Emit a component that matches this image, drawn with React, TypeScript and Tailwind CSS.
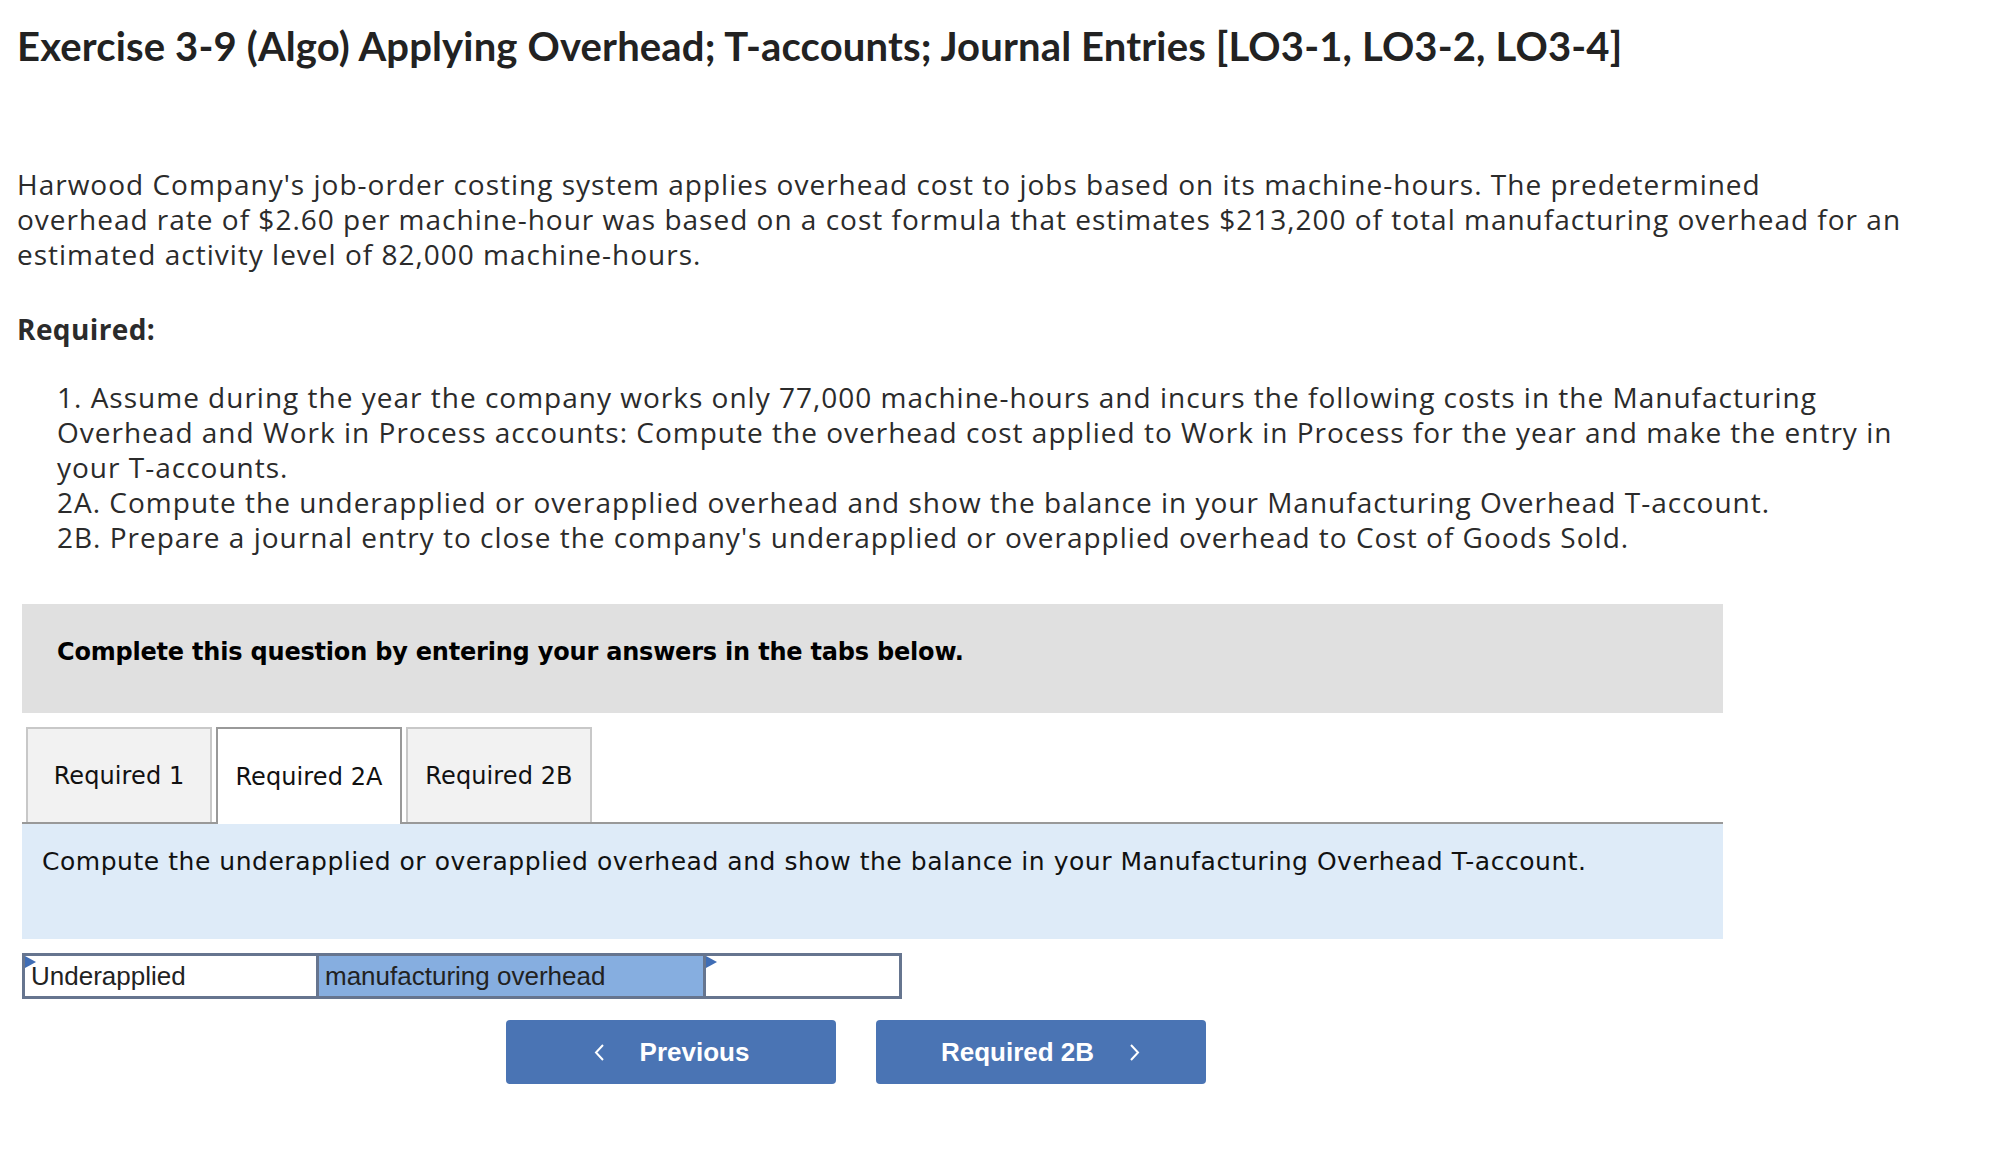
import React from "react";

const body = "font-['Open_Sans',sans-serif] text-[28px] leading-[35px] text-[#2b2b2b]";
const verdana = "font-['DejaVu_Sans',Verdana,sans-serif]";
const arial = "font-['Liberation_Sans',Arial,sans-serif]";

function Chevron({ dir }: { dir: "left" | "right" }) {
  return (
    <svg width="13" height="19" viewBox="0 0 13 19" className="shrink-0">
      <polyline
        points={dir === "left" ? "10,2 3,9.5 10,17" : "3,2 10,9.5 3,17"}
        fill="none"
        stroke="white"
        strokeWidth="2"
      />
    </svg>
  );
}

function Flag() {
  return (
    <svg width="11" height="13" viewBox="0 0 11 13" className="absolute left-0 top-0">
      <polygon points="0,0 11,6 0,12" fill="#3f6db5" />
    </svg>
  );
}

const TABS = ["Required 1", "Required 2A", "Required 2B"];

export default function App() {
  return (
    <div className="min-h-screen bg-white pb-10">
      <div className="pl-[17px] pt-[22px]">
        <h1 className="font-['Lato',sans-serif] text-[40px] font-bold leading-[48px] tracking-[0.15px] text-[#222]">
          Exercise 3-9 (Algo) Applying Overhead; T-accounts; Journal Entries [LO3-1, LO3-2, LO3-4]
        </h1>

        <p className={`${body} mt-[97px] whitespace-nowrap tracking-[1px]`}>
          Harwood Company's job-order costing system applies overhead cost to jobs based on its machine-hours. The predetermined
          <br />
          overhead rate of $2.60 per machine-hour was based on a cost formula that estimates $213,200 of total manufacturing overhead for an
          <br />
          estimated activity level of 82,000 machine-hours.
        </p>

        <p className={`${body} mt-[40px] font-bold tracking-[0.4px]`}>Required:</p>

        <p className={`${body} mt-[33px] whitespace-nowrap pl-[40px] tracking-[1px]`}>
          1. Assume during the year the company works only 77,000 machine-hours and incurs the following costs in the Manufacturing
          <br />
          Overhead and Work in Process accounts: Compute the overhead cost applied to Work in Process for the year and make the entry in
          <br />
          your T-accounts.
          <br />
          2A. Compute the underapplied or overapplied overhead and show the balance in your Manufacturing Overhead T-account.
          <br />
          2B. Prepare a journal entry to close the company's underapplied or overapplied overhead to Cost of Goods Sold.
        </p>
      </div>

      <div className="ml-[22px] mt-[49px] w-[1701px]">
        <div className="h-[109px] bg-[#e0e0e0] pl-[35px] pt-[30px]">
          <p className={`${verdana} text-[24px] font-bold tracking-[-0.2px] text-black`}>
            Complete this question by entering your answers in the tabs below.
          </p>
        </div>

        <div className="mt-[14px] flex items-end gap-[4px] border-b-2 border-[#999] pl-[4px]">
          {TABS.map((t) => {
            const active = t === "Required 2A";
            return (
              <div
                key={t}
                className={`${verdana} flex h-[95px] w-[186px] items-center justify-center border-2 border-b-0 text-[24px] tracking-[0.1px] text-[#111] ${
                  active ? "-mb-[2px] h-[97px] border-[#999] bg-white" : "border-[#c8c8c8] bg-[#f2f2f2]"
                }`}
              >
                {t}
              </div>
            );
          })}
        </div>

        <div className="h-[115px] bg-[#deebf8] pl-[20px] pt-[19px]">
          <p className={`${verdana} text-[25px] tracking-[0.53px] text-[#111]`}>
            Compute the underapplied or overapplied overhead and show the balance in your Manufacturing Overhead T-account.
          </p>
        </div>

        <div className={`${arial} mt-[14px] flex h-[46px] w-[880px] border-[3px] border-[#66758f] text-[26px] text-[#222]`}>
          <div className="relative flex w-[291px] items-center bg-white pl-[6px]">
            <Flag />
            Underapplied
          </div>
          <div className="flex w-[390px] items-center border-x-[3px] border-[#66758f] bg-[#86aee0] pl-[6px]">
            manufacturing overhead
          </div>
          <div className="relative flex flex-1 items-center bg-white">
            <Flag />
          </div>
        </div>

        <div className={`${arial} mt-[21px] flex gap-[40px] pl-[484px] text-[26px] font-bold text-white`}>
          <button className="flex h-[64px] w-[330px] items-center justify-center gap-[34px] rounded-[4px] bg-[#4a74b4]">
            <Chevron dir="left" />
            <span>Previous</span>
          </button>
          <button className="flex h-[64px] w-[330px] items-center justify-center gap-[34px] rounded-[4px] bg-[#4a74b4]">
            <span>Required 2B</span>
            <Chevron dir="right" />
          </button>
        </div>
      </div>
    </div>
  );
}
